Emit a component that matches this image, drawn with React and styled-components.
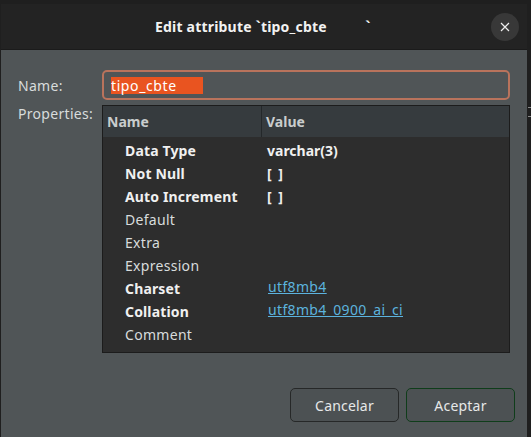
import React from 'react'
import styled, { createGlobalStyle } from 'styled-components'

const GlobalStyle = createGlobalStyle`
  html, body {
    margin: 0;
    padding: 0;
    background: #1f1f1f;
  }
`

const Dialog = styled.div`
  box-sizing: border-box;
  position: relative;
  width: 531px;
  height: 437px;
  padding: 4px 4px 0 1px;
  display: flex;
  flex-direction: column;
  font-family: 'Noto Sans', 'Open Sans', sans-serif;
  font-size: 14px;
  color: #e6e8e8;
`

const EdgeTick = styled.div`
  position: absolute;
  right: 0;
  top: ${p => p.$top}px;
  width: 3px;
  height: 1px;
  background: #8a8a8a;
`

const TitleBar = styled.header`
  height: 45px;
  flex-shrink: 0;
  background: #232323;
  border-bottom: 1px solid #1b1b1b;
  display: flex;
  align-items: center;
  justify-content: flex-end;
  position: relative;
  padding-right: 8px;
`

const Title = styled.div`
  position: absolute;
  left: 154px;
  top: 13px;
  font-weight: 700;
  letter-spacing: 0.2px;
  color: #f2f2f2;
  white-space: pre;
`

const CloseButton = styled.div`
  width: 28px;
  height: 28px;
  border-radius: 50%;
  background: #383838;
  display: flex;
  align-items: center;
  justify-content: center;
`

const Body = styled.div`
  flex: 1;
  background: #505557;
  padding: 20px 0 0 17px;
  display: flex;
  flex-direction: column;
`

const FieldRow = styled.div`
  display: flex;
  align-items: center;
  height: 30px;
`

const PropsRow = styled.div`
  display: flex;
  margin-top: 5px;
`

const Label = styled.div`
  width: 84px;
  flex-shrink: 0;
  color: #d8dcdc;
  letter-spacing: 0.3px;
`

const PropsLabel = styled(Label)`
  line-height: 17px;
`

const NameInput = styled.div`
  box-sizing: border-box;
  width: 408px;
  height: 30px;
  border: 2px solid #b9735c;
  border-radius: 5px;
  padding-left: 7px;
  display: flex;
  align-items: center;
`

const Selection = styled.span`
  background: #e95420;
  color: #fff;
  width: 92px;
  height: 17px;
  line-height: 17px;
  letter-spacing: 0.6px;
`

const Table = styled.div`
  box-sizing: border-box;
  width: 408px;
  height: 248px;
  background: #2d2d2d;
  border: 1px solid #1c1c1c;
`

const TableHead = styled.div`
  display: grid;
  grid-template-columns: 159px 1fr;
  height: 31px;
  background: #363b3e;
  font-weight: 700;
  color: #c9cdcd;
  align-items: center;
`

const HeadCell = styled.div`
  height: 100%;
  line-height: 31px;
  padding-left: 4px;

  &:first-child {
    border-right: 1px solid #24282a;
  }
`

const TableBody = styled.div`
  padding-top: 2px;
`

const Row = styled.div`
  display: grid;
  grid-template-columns: 142px 1fr;
  height: 23px;
  line-height: 23px;
  padding-left: 22px;
`

const KeyCell = styled.div`
  font-weight: ${p => (p.$bold ? 700 : 400)};
  color: ${p => (p.$bold ? '#f0f0f0' : '#d8dcdc')};
  letter-spacing: ${p => (p.$bold ? 0.15 : 0.3)}px;
`

const ValueCell = styled.div`
  font-weight: 700;
  color: #f0f0f0;
  word-spacing: 3px;
`

const LinkCell = styled.a`
  color: #5cb3de;
  text-decoration: underline;
  justify-self: start;
  letter-spacing: 0.35px;
  margin-left: 1px;
  margin-top: -2px;
`

const Footer = styled.div`
  display: flex;
  justify-content: flex-end;
  gap: 7px;
  margin-top: 35px;
  padding-right: 12px;
`

const Button = styled.div`
  box-sizing: border-box;
  width: 109px;
  height: 34px;
  border-radius: 5px;
  border: 1px solid ${p => (p.$accept ? '#0f3d1a' : '#262828')};
  background: #4c5153;
  color: #e6e8e8;
  letter-spacing: 0.2px;
  display: flex;
  align-items: center;
  justify-content: center;
`

const rows = [
  { key: 'Data Type', bold: true, value: 'varchar(3)' },
  { key: 'Not Null', bold: true, value: '[ ]' },
  { key: 'Auto Increment', bold: true, value: '[ ]' },
  { key: 'Default' },
  { key: 'Extra' },
  { key: 'Expression' },
  { key: 'Charset', bold: true, link: 'utf8mb4' },
  { key: 'Collation', bold: true, link: 'utf8mb4_0900_ai_ci' },
  { key: 'Comment' }
]

const App = () => (
  <>
    <GlobalStyle />
    <Dialog>
      <EdgeTick $top={107} />
      <EdgeTick $top={116} />
      <TitleBar>
        <Title>Edit attribute `tipo_cbte          `</Title>
        <CloseButton>
          <svg width="10" height="10" viewBox="0 0 10 10">
            <path d="M1 1l8 8M9 1l-8 8" stroke="#eeeeee" strokeWidth="1.2" fill="none" />
          </svg>
        </CloseButton>
      </TitleBar>
      <Body>
        <FieldRow>
          <Label>Name:</Label>
          <NameInput>
            <Selection>tipo_cbte</Selection>
          </NameInput>
        </FieldRow>
        <PropsRow>
          <PropsLabel>Properties:</PropsLabel>
          <Table>
            <TableHead>
              <HeadCell>Name</HeadCell>
              <HeadCell>Value</HeadCell>
            </TableHead>
            <TableBody>
              {rows.map(r => (
                <Row key={r.key}>
                  <KeyCell $bold={r.bold}>{r.key}</KeyCell>
                  {r.value && <ValueCell>{r.value}</ValueCell>}
                  {r.link && <LinkCell>{r.link}</LinkCell>}
                </Row>
              ))}
            </TableBody>
          </Table>
        </PropsRow>
        <Footer>
          <Button>Cancelar</Button>
          <Button $accept>Aceptar</Button>
        </Footer>
      </Body>
    </Dialog>
  </>
)

export default App
